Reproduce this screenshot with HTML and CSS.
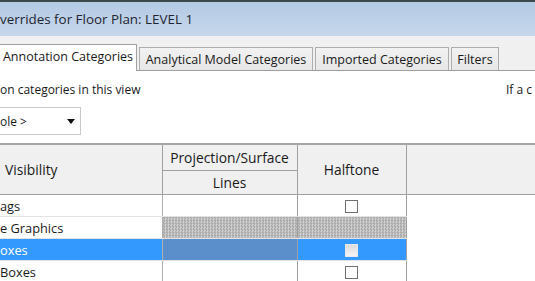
FILE: index.html
```html
<!DOCTYPE html>
<html>
<head>
<meta charset="utf-8">
<link rel="stylesheet" href="styles.css">
</head>
<body>
<div class="window">
  <div class="titlebar">verrides for Floor Plan: LEVEL 1</div>
  <div class="tabstrip">
    <div class="tab active t1">Annotation Categories</div>
    <div class="tab t2">Analytical Model Categories</div>
    <div class="tab t3">Imported Categories</div>
    <div class="tab t4">Filters</div>
  </div>
  <div class="panel">
    <div class="inforow">
      <span>on categories in this view</span>
      <span class="hint">If a c</span>
    </div>
    <div class="select"><span>ole &gt;</span><span class="arrow"></span></div>
    <table class="grid">
      <colgroup>
        <col class="c1"><col class="c2"><col class="c3"><col class="c4">
      </colgroup>
      <thead>
        <tr class="h1">
          <th rowspan="2" class="vis">Visibility</th>
          <th>Projection/Surface</th>
          <th rowspan="2">Halftone</th>
          <th rowspan="2" class="empty"></th>
        </tr>
        <tr class="h2">
          <th>Lines</th>
        </tr>
      </thead>
      <tbody>
        <tr>
          <td class="name">ags</td>
          <td></td>
          <td class="cb"><span class="box"></span></td>
          <td class="blank"></td>
        </tr>
        <tr>
          <td class="name">e Graphics</td>
          <td class="hatch"></td>
          <td class="hatch"></td>
          <td class="blank"></td>
        </tr>
        <tr class="sel">
          <td class="name">oxes</td>
          <td class="dark"></td>
          <td class="cb"><span class="box selbox"></span></td>
          <td class="blank"></td>
        </tr>
        <tr>
          <td class="name">Boxes</td>
          <td></td>
          <td class="cb"><span class="box"></span></td>
          <td class="blank"></td>
        </tr>
      </tbody>
    </table>
  </div>
</div>
</body>
</html>
```

FILE: styles.css
```css
html, body {
  margin: 0;
  padding: 0;
  background: #ffffff;
  overflow: hidden;
}
body {
  width: 535px;
  height: 281px;
  font-family: "Open Sans", "Noto Sans", sans-serif;
  font-size: 12px;
  color: #1a1a1a;
}
.window {
  width: 535px;
  height: 281px;
  overflow: hidden;
  border-top: 2px solid #3c4a4d;
  box-sizing: border-box;
}
.titlebar {
  height: 34px;
  background: linear-gradient(#b4cae4, #c6d7eb);
  font-size: 13.4px;
  line-height: 34px;
  color: #1e2530;
  white-space: nowrap;
}
.tabstrip {
  height: 35px;
  background: #f0f0f0;
  display: flex;
  align-items: flex-end;
  border-bottom: 1px solid #a0a0a0;
  box-sizing: border-box;
}
.tab {
  height: 23px;
  box-sizing: border-box;
  border: 1px solid #adadad;
  border-bottom: none;
  background: linear-gradient(#f2f2f2, #e6e6e6);
  display: flex;
  align-items: center;
  justify-content: center;
  white-space: nowrap;
  margin-right: 2px;
  font-size: 12.5px;
}
.tab.active {
  height: 27px;
  background: #ffffff;
  border-color: #a0a0a0;
  margin-bottom: -1px;
  padding-bottom: 3px;
  position: relative;
  z-index: 1;
}
.t1 { width: 138px; margin-left: -1px; }
.t2 { width: 174px; }
.t3 { width: 134px; }
.t4 { width: 48px; }

.panel {
  background: #ffffff;
}
.inforow {
  display: flex;
  justify-content: space-between;
  height: 18px;
  line-height: 18px;
  padding-top: 10px;
  white-space: nowrap;
}
.hint {
  width: 29px;
  overflow: hidden;
}
.select {
  margin-top: 8px;
  width: 81px;
  height: 28px;
  box-sizing: border-box;
  border: 1px solid #c8c8c8;
  border-left: none;
  display: flex;
  align-items: center;
  justify-content: space-between;
  padding-right: 5px;
}
.arrow {
  width: 0;
  height: 0;
  border-left: 4px solid transparent;
  border-right: 4px solid transparent;
  border-top: 5px solid #111;
}
.grid {
  margin-top: 8px;
  border-collapse: collapse;
  table-layout: fixed;
  width: 536px;
  border-top: 2px solid #a4a4a4;
}
.c1 { width: 162px; }
.c2 { width: 135px; }
.c3 { width: 109px; }
.c4 { width: 130px; }
.grid th {
  background: #f0f0f0;
  font-weight: normal;
  font-size: 13.8px;
  border: 1px solid #a0a0a0;
  border-left: none;
  padding: 0;
  white-space: nowrap;
  overflow: hidden;
}
.grid th.vis {
  text-align: left;
  padding-left: 5px;
}
.h1 th { height: 25px; }
.h2 th { height: 23px; }
.grid td {
  height: 21px;
  padding: 0;
  border-bottom: 1px solid #e2e2e2;
  border-right: 1px solid #a0a0a0;
  white-space: nowrap;
  overflow: hidden;
}
.grid td.name {
  font-size: 12.8px;
  border-right-color: #b0b0b0;
}
.grid td.blank {
  border-right: none;
  border-bottom: none;
}
.grid th.empty { border-right: none; }
.cb { text-align: center; }
.box {
  display: inline-block;
  width: 11px;
  height: 11px;
  border: 1px solid #707070;
  background: #fff;
  vertical-align: middle;
}
.hatch {
  background: repeating-conic-gradient(#999999 0 25%, #e6e6e6 0 50%) 0 0 / 3px 3px;
}
.sel td.name {
  background: #3399ff;
  color: #ffffff;
  border-top: 1px dotted #1f3d66;
}
.sel td.dark {
  background: #5a8fcb;
}
.sel td.cb {
  background: #3399ff;
}
.selbox {
  border-color: #e8e8e8;
  background: linear-gradient(#dcdcdc, #f4f4f4);
}
```
